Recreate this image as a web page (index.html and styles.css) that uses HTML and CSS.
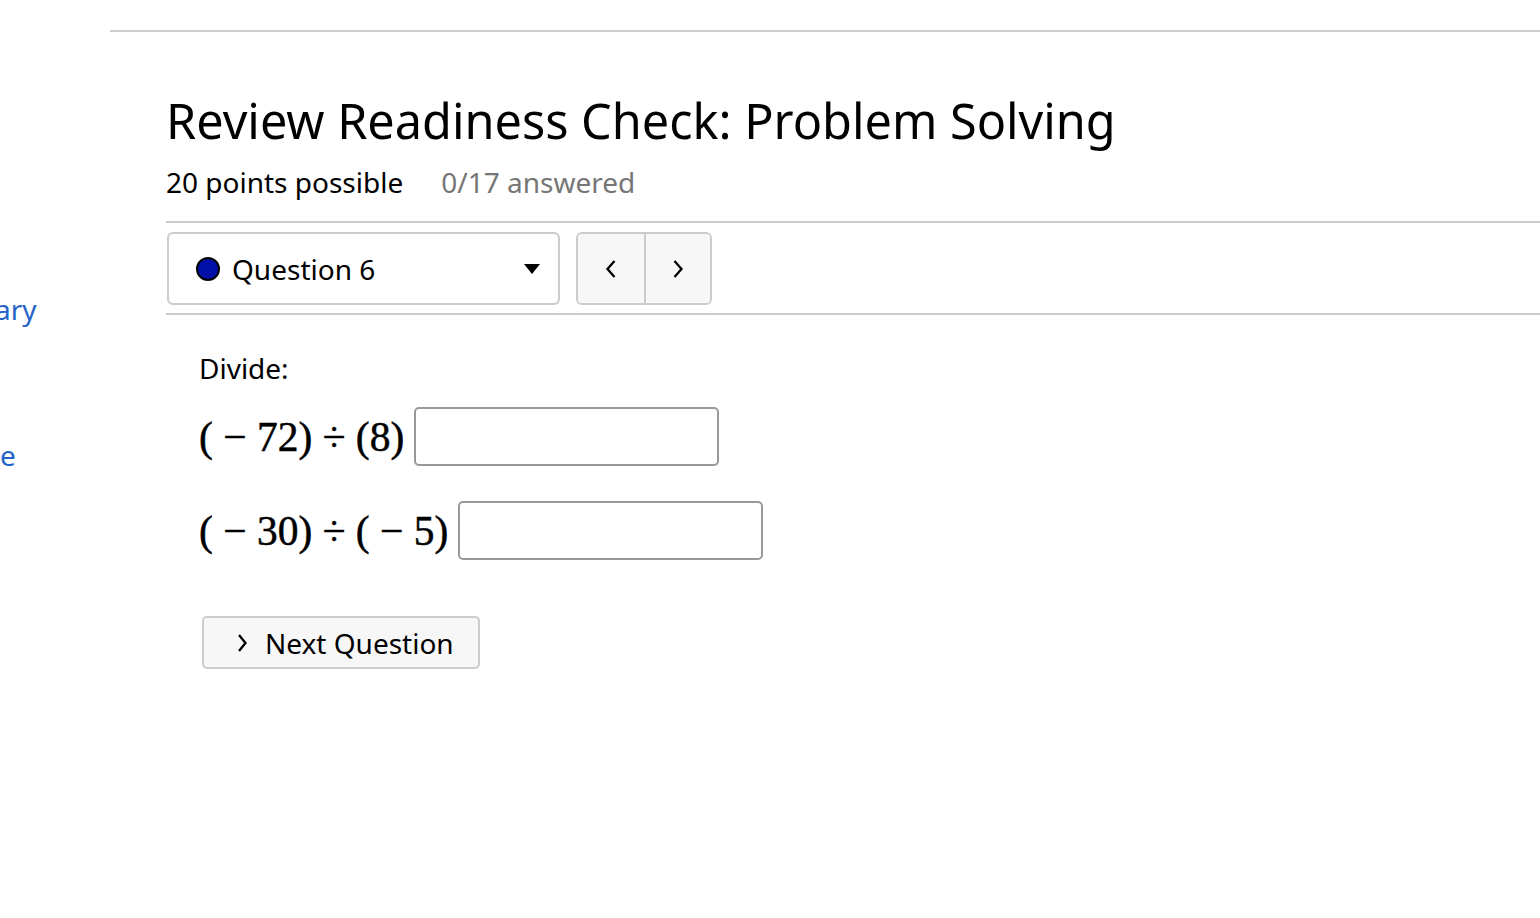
FILE: index.html
```html
<!DOCTYPE html>
<html lang="en">

<head>
    <title>Review Readiness Check: Problem Solving</title>
    <meta charset="UTF-8">
    <meta name="viewport" content="width=device-width, initial-scale=1.0">
    <link rel="stylesheet" href="styles.css">
</head>

<body>
    <div class="page">
        <nav class="sidebar">
            <ul class="side-links">
                <li><a href="#">Summary</a></li>
                <li><a href="#">Resume</a></li>
            </ul>
        </nav>

        <div class="main">
            <div class="top-rule"></div>

            <div class="assessment">
                <h1 class="title">Review Readiness Check: Problem Solving</h1>
                <div class="meta">
                    <span class="points">20 points possible</span>
                    <span class="answered">0/17 answered</span>
                </div>

                <div class="question-bar">
                    <button type="button" class="question-select">
                        <span class="dot"></span>
                        <span class="question-label">Question 6</span>
                        <span class="caret"></span>
                    </button>
                    <div class="nav-buttons">
                        <button type="button" class="nav-btn" aria-label="Previous">
                            <svg width="14" height="22" viewBox="0 0 14 22">
                                <path d="M10.5 3 L3.5 11 L10.5 19" fill="none" stroke="#000" stroke-width="2.3" />
                            </svg>
                        </button>
                        <button type="button" class="nav-btn" aria-label="Next">
                            <svg width="14" height="22" viewBox="0 0 14 22">
                                <path d="M3.5 3 L10.5 11 L3.5 19" fill="none" stroke="#000" stroke-width="2.3" />
                            </svg>
                        </button>
                    </div>
                </div>

                <div class="question">
                    <p class="prompt">Divide:</p>

                    <div class="math-row">
                        <span class="math">( &minus; 72) &divide; (8)</span>
                        <input type="text" class="answer">
                    </div>

                    <div class="math-row">
                        <span class="math">( &minus; 30) &divide; ( &minus; 5)</span>
                        <input type="text" class="answer">
                    </div>

                    <button type="button" class="next-btn">
                        <svg width="14" height="22" viewBox="0 0 14 22">
                            <path d="M4 3 L10.5 11 L4 19" fill="none" stroke="#000" stroke-width="2.3" />
                        </svg>
                        Next Question
                    </button>
                </div>
            </div>
        </div>
    </div>
</body>

</html>
```

FILE: styles.css
```css
body {
    margin: 0;
    font-family: "Noto Sans", "Open Sans", sans-serif;
    color: #000;
    background: #fff;
}

.page {
    display: flex;
    min-height: 918px;
}

.sidebar {
    width: 110px;
    flex-shrink: 0;
    overflow: hidden;
}

.side-links {
    list-style: none;
    margin: 290px 0 0 -90px;
    padding: 0;
    font-size: 28px;
    white-space: nowrap;
}

.side-links li {
    margin-bottom: 108px;
}

.side-links a {
    color: #2563c9;
    text-decoration: none;
}

.main {
    flex: 1;
}

.top-rule {
    margin-top: 30px;
    border-top: 2px solid #caced2;
}

.assessment {
    padding-left: 56px;
}

.title {
    margin: 59px 0 0;
    font-size: 48.6px;
    font-weight: 400;
    line-height: 1.2;
}

.meta {
    display: flex;
    gap: 38px;
    font-size: 28px;
    margin-top: 14px;
    padding-bottom: 20px;
    border-bottom: 2px solid #ccc;
}

.answered {
    color: #767676;
}

.question-bar {
    display: flex;
    gap: 16px;
    padding: 9px 0 8px 1px;
    border-bottom: 2px solid #ccc;
}

.question-select {
    display: flex;
    align-items: center;
    box-sizing: border-box;
    width: 393px;
    height: 73px;
    padding: 0 18px 0 27px;
    background: #fff;
    border: 2px solid #ccc;
    border-radius: 6px;
    font-family: inherit;
    font-size: 28px;
    color: #000;
}

.dot {
    width: 20px;
    height: 20px;
    border-radius: 50%;
    background: #0010a8;
    border: 2px solid #000;
    margin-right: 12px;
}

.question-label {
    flex: 1;
    text-align: left;
}

.caret {
    width: 0;
    height: 0;
    border-left: 8px solid transparent;
    border-right: 8px solid transparent;
    border-top: 10px solid #000;
}

.nav-buttons {
    display: flex;
    box-sizing: border-box;
    height: 73px;
    border: 2px solid #ccc;
    border-radius: 6px;
    overflow: hidden;
    background: #f7f7f7;
}

.nav-btn {
    width: 66px;
    border: none;
    background: #f7f7f7;
    display: flex;
    align-items: center;
    justify-content: center;
    padding: 0;
}

.nav-btn + .nav-btn {
    border-left: 2px solid #ccc;
}

.question {
    padding-left: 33px;
}

.prompt {
    margin: 34px 0 20px;
    font-size: 28px;
}

.math-row {
    display: flex;
    align-items: center;
    gap: 10px;
    margin-bottom: 35px;
}

.math {
    font-family: "Liberation Serif", serif;
    font-size: 41.5px;
    -webkit-text-stroke: 0.5px #000;
    white-space: pre;
}

.answer {
    width: 305px;
    height: 59px;
    box-sizing: border-box;
    border: 2px solid #999;
    border-radius: 5px;
}

.next-btn {
    display: flex;
    align-items: center;
    gap: 16px;
    margin: 56px 0 0 3px;
    height: 53px;
    padding: 0 24px 0 31px;
    background: #f7f7f7;
    border: 2px solid #ccc;
    border-radius: 5px;
    font-family: inherit;
    font-size: 28px;
    color: #000;
}
```
